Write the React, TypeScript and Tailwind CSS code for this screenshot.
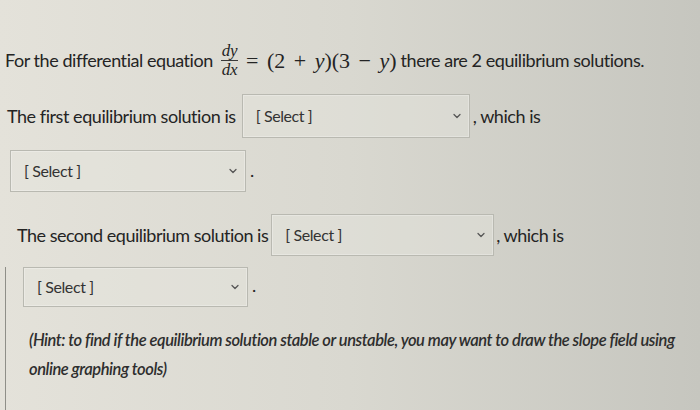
import { ChevronDown } from 'lucide-react';

// Dropdown placeholder used inside the question text
function SelectBox({ width, height }: { width: string; height: string }) {
  return (
    <div
      className={`${width} ${height} flex items-center justify-between border border-[#b9b9b1] bg-[#e6e5de]/40 pl-[13px] pr-[6px] shadow-[inset_0_0_0_1px_rgba(255,255,255,0.25)]`}
    >
      <span className="text-[16px] text-[#333] tracking-[-0.4px]">[ Select ]</span>
      <ChevronDown className="size-3 text-[#555] stroke-[2.5]" />
    </div>
  );
}

function Fraction() {
  return (
    <span className="ml-[8px] mr-[8px] inline-flex flex-col items-center font-['Liberation_Serif',serif] italic text-[17px] leading-[16px]">
      <span className="px-[1px]">dy</span>
      <span className="my-[1px] h-px w-full bg-[#3a3a3a]" />
      <span className="px-[1px]">dx</span>
    </span>
  );
}

export default function App() {
  return (
    <div className="relative h-[410px] w-[700px] overflow-hidden bg-gradient-to-r from-[#e4e2da] via-[#d9d8d0] to-[#c6c6bf] font-['Lato',sans-serif] text-[#242424]">
      {/* Question stem */}
      <div className="flex items-center pt-[43px] pl-[5px] text-[18px] tracking-[-0.45px]">
        <span>For the differential equation</span>
        <Fraction />
        <span className="font-['Liberation_Serif',serif] text-[22px] tracking-[0px] [word-spacing:3px]">
          = (2 + <i>y</i>)(3 − <i>y</i>)
        </span>
        <span className="ml-[4px]">there are 2 equilibrium solutions.</span>
      </div>

      {/* First solution */}
      <div className="mt-[16px] flex items-center pl-[7px] text-[18px] tracking-[-0.45px]">
        <span className="mr-[6px]">The first equilibrium solution is</span>
        <SelectBox width="w-[228px]" height="h-[44px]" />
        <span className="ml-[3px]">, which is</span>
      </div>
      <div className="mt-[12px] flex items-end pl-[10px] text-[18px]">
        <SelectBox width="w-[236px]" height="h-[42px]" />
        <span className="ml-[4px] mb-[8px]">.</span>
      </div>

      {/* Second solution */}
      <div className="mt-[22px] flex items-center pl-[17px] text-[18px] tracking-[-0.5px]">
        <span className="mr-[3px]">The second equilibrium solution is</span>
        <SelectBox width="w-[223px]" height="h-[42px]" />
        <span className="ml-[2px]">, which is</span>
      </div>

      {/* Hint panel */}
      <div className="ml-[5px] mt-[11px] h-[144px] border-b border-l border-[#8f8f88]">
        <div className="flex items-end pl-[17px] text-[18px]">
          <SelectBox width="w-[225px]" height="h-[40px]" />
          <span className="ml-[4px] mb-[8px]">.</span>
        </div>
        <p className="mt-[19px] pl-[23px] pr-[4px] text-[16.5px] font-semibold italic leading-[29px] tracking-[-0.45px] text-[#2e2e2e]">
          (Hint: to find if the equilibrium solution stable or unstable, you may want to draw the slope field using online graphing tools)
        </p>
      </div>
    </div>
  );
}
